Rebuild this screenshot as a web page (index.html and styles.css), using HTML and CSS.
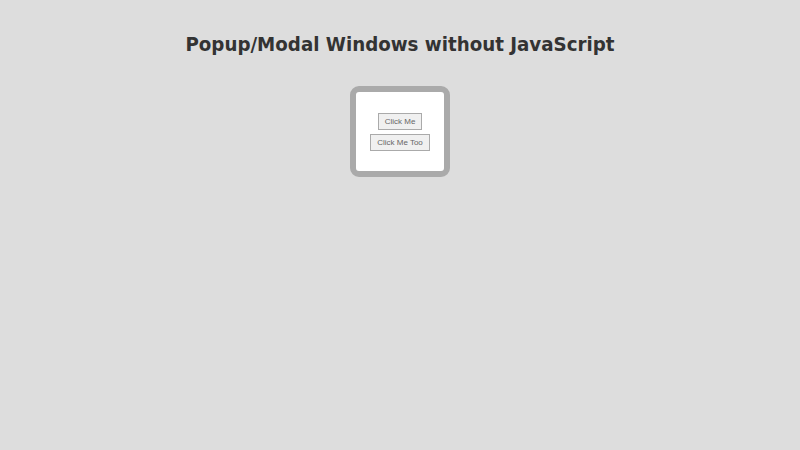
FILE: index.html
```html
<!DOCTYPE html>
<html lang="en">
<head>
    <meta charset="UTF-8">
    <meta name="viewport" content="width=device-width, initial-scale=1.0">
    <title>Popup/Modal Windows without JavaScript</title>
    <link rel="stylesheet" href="styles.css">
</head>
<body>
    <h1>Popup/Modal Windows without JavaScript</h1>
    <div class="box">
        <a class="button" href="#popup1">Click Me</a>
        <a class="button" href="#popup2">Click Me Too</a>
    </div>
</body>
</html>
```

FILE: styles.css
```css
body {
    margin: 0;
    font-family: 'DejaVu Sans', Tahoma, sans-serif;
    background-color: #dddddd;
    height: 100vh;
}
h1 {
    margin: 0;
    padding-top: 31px;
    text-align: center;
    font-family: 'DejaVu Sans Condensed', 'DejaVu Sans', Tahoma, sans-serif;
    font-size: 20.3px;
    line-height: 26px;
    color: #333;
}
.box {
    width: 88px;
    margin: 29px auto 0;
    padding: 21px 0 20px;
    background-color: #fff;
    border: 6px solid #aaa;
    border-radius: 9px;
    display: flex;
    flex-direction: column;
    align-items: center;
    gap: 4px;
}
.button {
    font-family: 'Liberation Sans', Arial, sans-serif;
    font-size: 8px;
    line-height: 13px;
    padding: 1px 6px;
    color: #666;
    background-color: #f0f0f0;
    border: 1px solid #aaa;
    text-decoration: none;
}
```
